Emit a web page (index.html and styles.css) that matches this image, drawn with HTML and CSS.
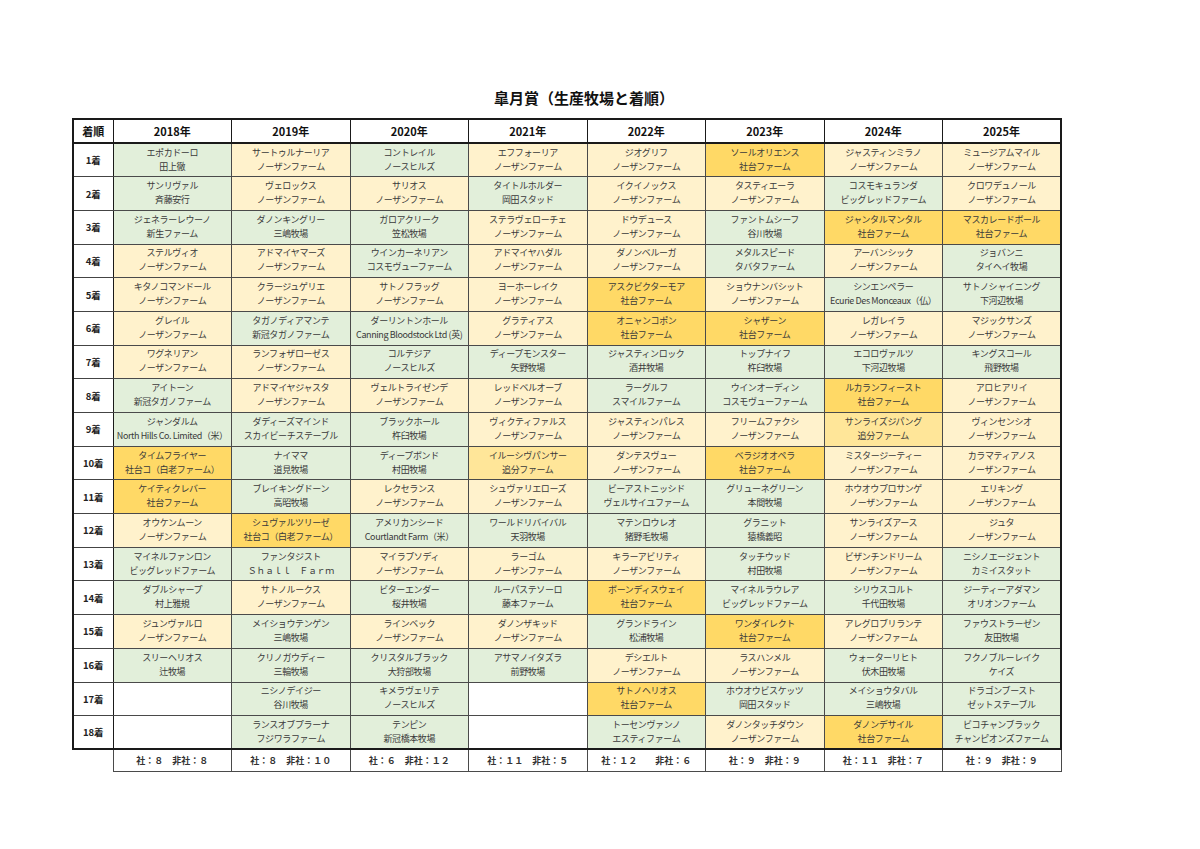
FILE: index.html
```html
<!DOCTYPE html>
<html lang="ja">
<head>
<meta charset="utf-8">
<title>皐月賞（生産牧場と着順）</title>
<link rel="stylesheet" href="styles.css">
</head>
<body>
<div class="page">
  <h1 class="title">皐月賞（生産牧場と着順）</h1>
  <table class="grid">
    <colgroup>
      <col class="c-rank">
      <col class="c-year"><col class="c-year"><col class="c-year"><col class="c-year">
      <col class="c-year"><col class="c-year"><col class="c-year"><col class="c-year">
    </colgroup>
    <thead>
      <tr>
        <th class="rank">着順</th>
        <th>2018年</th><th>2019年</th><th>2020年</th><th>2021年</th>
        <th>2022年</th><th>2023年</th><th>2024年</th><th class="last">2025年</th>
      </tr>
    </thead>
    <tbody>
      <tr><th class="rank">1着</th>
        <td class="g">エポカドーロ<br>田上徹</td>
        <td class="n">サートゥルナーリア<br>ノーザンファーム</td>
        <td class="g">コントレイル<br>ノースヒルズ</td>
        <td class="n">エフフォーリア<br>ノーザンファーム</td>
        <td class="n">ジオグリフ<br>ノーザンファーム</td>
        <td class="s">ソールオリエンス<br>社台ファーム</td>
        <td class="n">ジャスティンミラノ<br>ノーザンファーム</td>
        <td class="n last">ミュージアムマイル<br>ノーザンファーム</td></tr>
      <tr><th class="rank">2着</th>
        <td class="g">サンリヴァル<br>斉藤安行</td>
        <td class="n">ヴェロックス<br>ノーザンファーム</td>
        <td class="n">サリオス<br>ノーザンファーム</td>
        <td class="g">タイトルホルダー<br>岡田スタッド</td>
        <td class="n">イクイノックス<br>ノーザンファーム</td>
        <td class="n">タスティエーラ<br>ノーザンファーム</td>
        <td class="g">コスモキュランダ<br>ビッグレッドファーム</td>
        <td class="n last">クロワデュノール<br>ノーザンファーム</td></tr>
      <tr><th class="rank">3着</th>
        <td class="g">ジェネラーレウーノ<br>新生ファーム</td>
        <td class="g">ダノンキングリー<br>三嶋牧場</td>
        <td class="g">ガロアクリーク<br>笠松牧場</td>
        <td class="n">ステラヴェローチェ<br>ノーザンファーム</td>
        <td class="n">ドウデュース<br>ノーザンファーム</td>
        <td class="g">ファントムシーフ<br>谷川牧場</td>
        <td class="s">ジャンタルマンタル<br>社台ファーム</td>
        <td class="s last">マスカレードボール<br>社台ファーム</td></tr>
      <tr><th class="rank">4着</th>
        <td class="n">ステルヴィオ<br>ノーザンファーム</td>
        <td class="n">アドマイヤマーズ<br>ノーザンファーム</td>
        <td class="g">ウインカーネリアン<br>コスモヴューファーム</td>
        <td class="n">アドマイヤハダル<br>ノーザンファーム</td>
        <td class="n">ダノンベルーガ<br>ノーザンファーム</td>
        <td class="g">メタルスピード<br>タバタファーム</td>
        <td class="n">アーバンシック<br>ノーザンファーム</td>
        <td class="g last">ジョバンニ<br>タイヘイ牧場</td></tr>
      <tr><th class="rank">5着</th>
        <td class="n">キタノコマンドール<br>ノーザンファーム</td>
        <td class="n">クラージュゲリエ<br>ノーザンファーム</td>
        <td class="n">サトノフラッグ<br>ノーザンファーム</td>
        <td class="n">ヨーホーレイク<br>ノーザンファーム</td>
        <td class="s">アスクビクターモア<br>社台ファーム</td>
        <td class="n">ショウナンバシット<br>ノーザンファーム</td>
        <td class="g">シンエンペラー<br>Ecurie Des Monceaux（仏）</td>
        <td class="g last">サトノシャイニング<br>下河辺牧場</td></tr>
      <tr><th class="rank">6着</th>
        <td class="n">グレイル<br>ノーザンファーム</td>
        <td class="g">タガノディアマンテ<br>新冠タガノファーム</td>
        <td class="g">ダーリントンホール<br>Canning Bloodstock Ltd (英)</td>
        <td class="n">グラティアス<br>ノーザンファーム</td>
        <td class="s">オニャンコポン<br>社台ファーム</td>
        <td class="s">シャザーン<br>社台ファーム</td>
        <td class="n">レガレイラ<br>ノーザンファーム</td>
        <td class="n last">マジックサンズ<br>ノーザンファーム</td></tr>
      <tr><th class="rank">7着</th>
        <td class="n">ワグネリアン<br>ノーザンファーム</td>
        <td class="n">ランフォザローゼス<br>ノーザンファーム</td>
        <td class="g">コルテジア<br>ノースヒルズ</td>
        <td class="g">ディープモンスター<br>矢野牧場</td>
        <td class="g">ジャスティンロック<br>酒井牧場</td>
        <td class="g">トップナイフ<br>杵臼牧場</td>
        <td class="g">エコロヴァルツ<br>下河辺牧場</td>
        <td class="g last">キングスコール<br>飛野牧場</td></tr>
      <tr><th class="rank">8着</th>
        <td class="g">アイトーン<br>新冠タガノファーム</td>
        <td class="n">アドマイヤジャスタ<br>ノーザンファーム</td>
        <td class="n">ヴェルトライゼンデ<br>ノーザンファーム</td>
        <td class="n">レッドベルオーブ<br>ノーザンファーム</td>
        <td class="g">ラーグルフ<br>スマイルファーム</td>
        <td class="g">ウインオーディン<br>コスモヴューファーム</td>
        <td class="s">ルカランフィースト<br>社台ファーム</td>
        <td class="n last">アロヒアリイ<br>ノーザンファーム</td></tr>
      <tr><th class="rank">9着</th>
        <td class="g">ジャンダルム<br>North Hills Co. Limited（米）</td>
        <td class="g">ダディーズマインド<br>スカイビーチステーブル</td>
        <td class="g">ブラックホール<br>杵臼牧場</td>
        <td class="n">ヴィクティファルス<br>ノーザンファーム</td>
        <td class="n">ジャスティンパレス<br>ノーザンファーム</td>
        <td class="n">フリームファクシ<br>ノーザンファーム</td>
        <td class="o">サンライズジパング<br>追分ファーム</td>
        <td class="n last">ヴィンセンシオ<br>ノーザンファーム</td></tr>
      <tr><th class="rank">10着</th>
        <td class="s">タイムフライヤー<br>社台コ（白老ファーム）</td>
        <td class="g">ナイママ<br>道見牧場</td>
        <td class="g">ディープボンド<br>村田牧場</td>
        <td class="o">イルーシヴパンサー<br>追分ファーム</td>
        <td class="n">ダンテスヴュー<br>ノーザンファーム</td>
        <td class="s">ベラジオオペラ<br>社台ファーム</td>
        <td class="n">ミスタージーティー<br>ノーザンファーム</td>
        <td class="n last">カラマティアノス<br>ノーザンファーム</td></tr>
      <tr><th class="rank">11着</th>
        <td class="s">ケイティクレバー<br>社台ファーム</td>
        <td class="g">ブレイキングドーン<br>高昭牧場</td>
        <td class="n">レクセランス<br>ノーザンファーム</td>
        <td class="n">シュヴァリエローズ<br>ノーザンファーム</td>
        <td class="g">ビーアストニッシド<br>ヴェルサイユファーム</td>
        <td class="g">グリューネグリーン<br>本間牧場</td>
        <td class="n">ホウオウプロサンゲ<br>ノーザンファーム</td>
        <td class="n last">エリキング<br>ノーザンファーム</td></tr>
      <tr><th class="rank">12着</th>
        <td class="n">オウケンムーン<br>ノーザンファーム</td>
        <td class="s">シュヴァルツリーゼ<br>社台コ（白老ファーム）</td>
        <td class="g">アメリカンシード<br>Courtlandt Farm（米）</td>
        <td class="g">ワールドリバイバル<br>天羽牧場</td>
        <td class="g">マテンロウレオ<br>猪野毛牧場</td>
        <td class="g">グラニット<br>猿橋義昭</td>
        <td class="n">サンライズアース<br>ノーザンファーム</td>
        <td class="n last">ジュタ<br>ノーザンファーム</td></tr>
      <tr><th class="rank">13着</th>
        <td class="g">マイネルファンロン<br>ビッグレッドファーム</td>
        <td class="g">ファンタジスト<br>Ｓｈａｌｌ　Ｆａｒｍ</td>
        <td class="n">マイラプソディ<br>ノーザンファーム</td>
        <td class="n">ラーゴム<br>ノーザンファーム</td>
        <td class="n">キラーアビリティ<br>ノーザンファーム</td>
        <td class="g">タッチウッド<br>村田牧場</td>
        <td class="n">ビザンチンドリーム<br>ノーザンファーム</td>
        <td class="g last">ニシノエージェント<br>カミイスタット</td></tr>
      <tr><th class="rank">14着</th>
        <td class="g">ダブルシャープ<br>村上雅規</td>
        <td class="n">サトノルークス<br>ノーザンファーム</td>
        <td class="g">ビターエンダー<br>桜井牧場</td>
        <td class="g">ルーパステソーロ<br>藤本ファーム</td>
        <td class="s">ボーンディスウェイ<br>社台ファーム</td>
        <td class="g">マイネルラウレア<br>ビッグレッドファーム</td>
        <td class="g">シリウスコルト<br>千代田牧場</td>
        <td class="g last">ジーティーアダマン<br>オリオンファーム</td></tr>
      <tr><th class="rank">15着</th>
        <td class="n">ジュンヴァルロ<br>ノーザンファーム</td>
        <td class="g">メイショウテンゲン<br>三嶋牧場</td>
        <td class="n">ラインベック<br>ノーザンファーム</td>
        <td class="n">ダノンザキッド<br>ノーザンファーム</td>
        <td class="g">グランドライン<br>松浦牧場</td>
        <td class="s">ワンダイレクト<br>社台ファーム</td>
        <td class="n">アレグロブリランテ<br>ノーザンファーム</td>
        <td class="g last">ファウストラーゼン<br>友田牧場</td></tr>
      <tr><th class="rank">16着</th>
        <td class="g">スリーヘリオス<br>辻牧場</td>
        <td class="g">クリノガウディー<br>三輪牧場</td>
        <td class="g">クリスタルブラック<br>大狩部牧場</td>
        <td class="g">アサマノイタズラ<br>前野牧場</td>
        <td class="n">デシエルト<br>ノーザンファーム</td>
        <td class="n">ラスハンメル<br>ノーザンファーム</td>
        <td class="g">ウォーターリヒト<br>伏木田牧場</td>
        <td class="g last">フクノブルーレイク<br>ケイズ</td></tr>
      <tr><th class="rank">17着</th>
        <td class="e"></td>
        <td class="g">ニシノデイジー<br>谷川牧場</td>
        <td class="g">キメラヴェリテ<br>ノースヒルズ</td>
        <td class="e"></td>
        <td class="s">サトノヘリオス<br>社台ファーム</td>
        <td class="g">ホウオウビスケッツ<br>岡田スタッド</td>
        <td class="g">メイショウタバル<br>三嶋牧場</td>
        <td class="g last">ドラゴンブースト<br>ゼットステーブル</td></tr>
      <tr class="final"><th class="rank">18着</th>
        <td class="e"></td>
        <td class="g">ランスオブプラーナ<br>フジワラファーム</td>
        <td class="g">テンピン<br>新冠橋本牧場</td>
        <td class="e"></td>
        <td class="g">トーセンヴァンノ<br>エスティファーム</td>
        <td class="n">ダノンタッチダウン<br>ノーザンファーム</td>
        <td class="s">ダノンデサイル<br>社台ファーム</td>
        <td class="g last">ビコチャンブラック<br>チャンピオンズファーム</td></tr>
    </tbody>
    <tfoot>
      <tr>
        <td class="blank"></td>
        <td>社：８　非社：８</td>
        <td>社：８　非社：１０</td>
        <td>社：６　非社：１２</td>
        <td>社：１１　非社：５</td>
        <td>社：１２　　非社：６</td>
        <td>社：９　非社：９</td>
        <td>社：１１　非社：７</td>
        <td>社：９　非社：９</td>
      </tr>
    </tfoot>
  </table>
</div>
</body>
</html>
```

FILE: styles.css
```css
html, body {
  margin: 0;
  padding: 0;
  background: #ffffff;
}

body {
  font-family: "Noto Sans CJK JP", "Noto Sans", "Liberation Sans", sans-serif;
  color: #333333;
}

.page {
  width: 988px;
  padding: 87px 0 0 72px;
}

.title {
  margin: 0 0 10px 0;
  padding-left: 36px;
  font-size: 15px;
  line-height: 21px;
  font-weight: 700;
  text-align: center;
  color: #111111;
}

.grid {
  border-collapse: collapse;
  table-layout: fixed;
  width: 988px;
}

.c-rank { width: 40px; }
.c-year { width: 118.5px; }

.grid thead th {
  height: 22px;
  padding: 0;
  font-size: 11px;
  font-weight: 700;
  color: #111111;
  background: #ffffff;
  border: 1.5px solid #1a1a1a;
  border-top-width: 2px;
  border-bottom-width: 2px;
  text-align: center;
  vertical-align: middle;
}

.grid tbody tr {
  height: 33.7px;
}

.grid tbody th.rank {
  padding: 0;
  font-size: 9.5px;
  font-weight: 700;
  color: #222222;
  background: #ffffff;
  border: 1px solid #444444;
  border-left: 2px solid #1a1a1a;
  border-right: 1.5px solid #1a1a1a;
  text-align: center;
  vertical-align: middle;
}

.grid thead th.rank {
  border-left: 2px solid #1a1a1a;
}

.grid thead th.last,
.grid tbody td.last {
  border-right: 2px solid #1a1a1a;
}

.grid tbody td {
  padding: 1px 0 2px 0;
  font-size: 9px;
  line-height: 14px;
  letter-spacing: -0.4px;
  color: #3a3a3a;
  border: 1px solid #4a4a4a;
  text-align: center;
  vertical-align: middle;
  white-space: nowrap;
  overflow: hidden;
}

.grid tbody tr.final th,
.grid tbody tr.final td {
  border-bottom: 2px solid #1a1a1a;
}

.g { background: #e2efda; }
.n { background: #fff2cc; }
.s { background: #ffd966; }
.o { background: #ffe699; }
.e { background: #ffffff; }

.grid tfoot td {
  height: 21px;
  padding: 0;
  font-size: 9px;
  font-weight: 700;
  color: #333333;
  text-align: center;
  vertical-align: middle;
  border: 1px solid #4a4a4a;
  white-space: nowrap;
}

.grid tfoot td.blank {
  border: none;
  border-top: 2px solid #1a1a1a;
}
```
